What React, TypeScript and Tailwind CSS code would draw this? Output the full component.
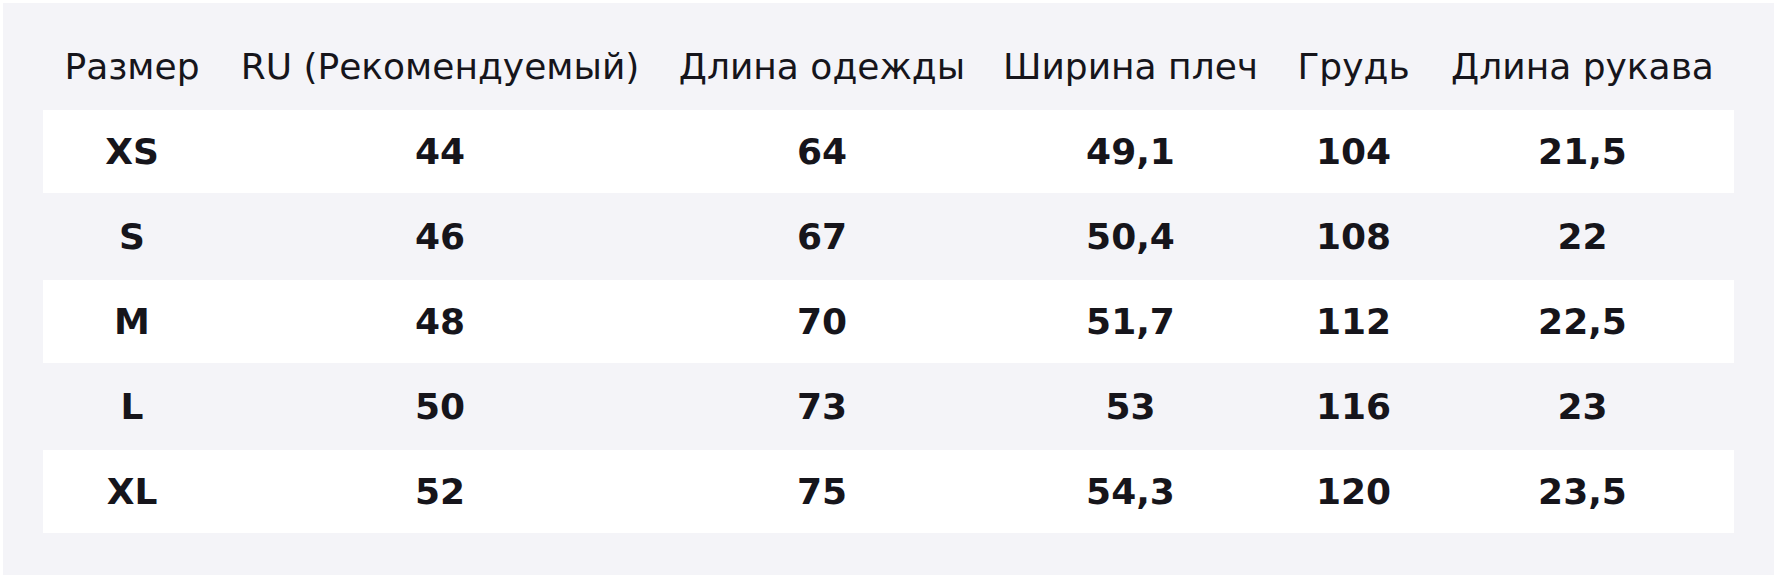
import React from 'react';

const columns = [
  { label: 'Размер', width: 'w-[178px]' },
  { label: 'RU (Рекомендуемый)', width: 'w-[438px]' },
  { label: 'Длина одежды', width: 'w-[326px]' },
  { label: 'Ширина плеч', width: 'w-[291px]' },
  { label: 'Грудь', width: 'w-[155px]' },
  { label: 'Длина рукава', width: 'w-[303px]' },
];

const rows = [
  ['XS', '44', '64', '49,1', '104', '21,5'],
  ['S', '46', '67', '50,4', '108', '22'],
  ['M', '48', '70', '51,7', '112', '22,5'],
  ['L', '50', '73', '53', '116', '23'],
  ['XL', '52', '75', '54,3', '120', '23,5'],
];

export default function App() {
  return (
    <div className="bg-white p-[3px] font-['DejaVu_Sans',sans-serif] text-[#16151b]">
      <div className="bg-[#f4f4f8] px-[40px] pt-[22px] pb-[42px]">
        <div className="flex flex-col gap-[2px]">
          {/* header */}
          <div className="flex h-[83px] items-center">
            {columns.map((col) => (
              <div key={col.label} className={`${col.width} shrink-0 text-center text-[36px] whitespace-nowrap`}>
                {col.label}
              </div>
            ))}
          </div>

          {rows.map((row, i) => (
            <div
              key={row[0]}
              className={`flex h-[83px] items-center ${i % 2 === 0 ? 'bg-white' : 'bg-transparent'}`}
            >
              {row.map((cell, j) => (
                <div key={j} className={`${columns[j].width} shrink-0 text-center text-[36px] font-bold`}>
                  {cell}
                </div>
              ))}
            </div>
          ))}
        </div>
      </div>
    </div>
  );
}
